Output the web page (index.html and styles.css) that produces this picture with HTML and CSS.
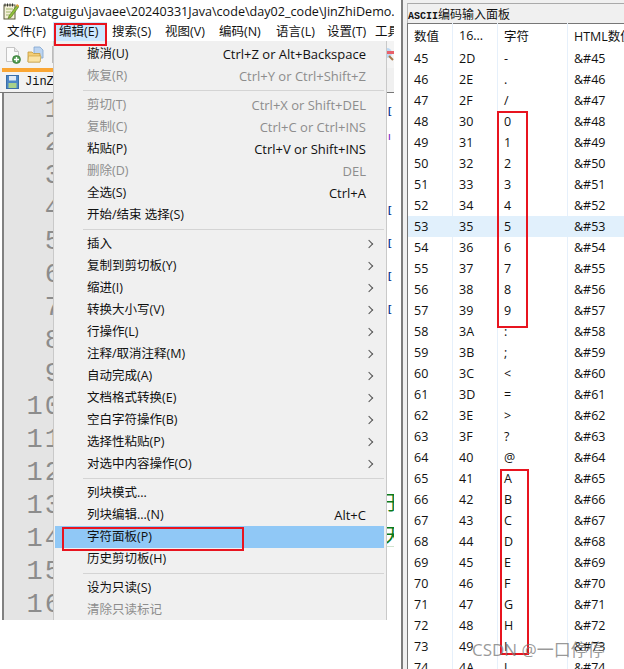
FILE: index.html
```html
<!DOCTYPE html>
<html lang="zh-CN">
<head>
<meta charset="utf-8">
<title>ASCII</title>
<link rel="stylesheet" href="styles.css">
</head>
<body>
<div class="stage">
  <section class="app">
    <header class="titlebar">
      <svg class="app-icon" viewBox="0 0 16 18" width="16" height="18">
        <rect x="1" y="3" width="11" height="14" fill="#f4f0d8" stroke="#5a5a3a"/>
        <path d="M2 1.5v3M4.5 1.5v3M7 1.5v3M9.500 1.500v3" stroke="#333" stroke-width="1"/>
        <path d="M3 7h7M3 10h5M3 13h4" stroke="#9fb56a"/>
        <path d="M6 14l8-11 2 1.500-8 11-3 1z" fill="#8fbf3a" stroke="#4d6b1a" stroke-width=".6"/>
        <path d="M13 3.500l1-1.500 2 1.500-1 1.500z" fill="#e8a23c"/>
      </svg>
      <span class="title-text">D:\atguigu\javaee\20240331Java\code\day02_code\JinZhiDemo.</span>
    </header>
    <nav class="menubar">
      <span class="top-item item-file">文件(F)</span>
      <span class="top-item item-edit">编辑(E)</span>
      <span class="top-item item-search">搜索(S)</span>
      <span class="top-item item-view">视图(V)</span>
      <span class="top-item item-enc">编码(N)</span>
      <span class="top-item item-lang">语言(L)</span>
      <span class="top-item item-set">设置(T)</span>
      <span class="top-item item-tool">工具</span>
    </nav>
    <div class="toolbar">
      <svg class="tool-new" viewBox="0 0 16 18" width="16" height="18">
        <path d="M1.500 1.500h8l4 4v10h-12z" fill="#fbfbfb" stroke="#c4c4c4"/>
        <path d="M9.500 1.500v4h4" fill="#e8e8e8" stroke="#c4c4c4"/>
        <circle cx="11.500" cy="13.500" r="4" fill="#4f9a4f" stroke="#2f6f2f" stroke-width=".6"/>
        <path d="M11.500 11v5M9 13.500h5" stroke="#fff" stroke-width="1.400"/>
      </svg>
      <svg class="tool-open" viewBox="0 0 17 17" width="17" height="17">
        <path d="M7 1h6l3 3v8H7z" fill="#bcd4f0" stroke="#7fa3cf" stroke-width=".8"/>
        <path d="M1 6h4l1.500 1.500H13V16H1z" fill="#f4cd74" stroke="#c49a3c" stroke-width=".8"/>
        <path d="M1.500 10H14l-1 6H1z" fill="#fbe3a4" stroke="#c49a3c" stroke-width=".6"/>
      </svg>
      <span class="tool-sep"></span>
      <svg class="tool-cut" viewBox="0 0 8 13" width="8" height="13">
        <circle cx="1" cy="5" r="5" fill="#bcd8f2"/>
        <rect x="0" y="3" width="8" height="3" fill="#e8606a"/>
        <path d="M3 8l4 4" stroke="#a8794a" stroke-width="2"/>
      </svg>
    </div>
    <div class="tabbar">
      <div class="tab">
        <svg class="tab-icon" viewBox="0 0 13 14" width="13" height="14">
          <rect x=".5" y=".5" width="12" height="13" fill="#4d86c6" stroke="#3a6ea8"/>
          <rect x="3" y="1" width="7" height="4.500" fill="#dfe9f4"/>
          <rect x="2.500" y="8" width="8" height="5" fill="#a8d08a"/>
        </svg>
        <span class="tab-name">JinZhiDemo</span>
      </div>
    </div>
    <div class="editor">
      <div class="gutter">
        <span class="ln">1</span><span class="ln">2</span><span class="ln">3</span><span class="ln">4</span>
        <span class="ln">5</span><span class="ln">6</span><span class="ln">7</span><span class="ln">8</span>
        <span class="ln">9</span><span class="ln">10</span><span class="ln">11</span><span class="ln">12</span>
        <span class="ln">13</span><span class="ln">14</span><span class="ln">15</span><span class="ln">16</span>
      </div>
      <div class="code">
        <div class="line"><span class="frag frag-b">[ '</span></div>
        <div class="line"><span class="frag frag-p">|</span></div>
        <div class="line"></div>
        <div class="line"><span class="frag frag-b">[ '</span></div>
        <div class="line"><span class="frag frag-b">[ '</span></div>
        <div class="line"><span class="frag frag-b">[ '</span></div>
        <div class="line"><span class="frag frag-b">[ '</span></div>
        <div class="line"></div><div class="line"></div><div class="line"></div>
        <div class="line"></div><div class="line"></div>
        <div class="line"><span class="frag frag-g">于</span></div>
        <div class="line"><span class="frag frag-g frag-u">天</span></div>
      </div>
    </div>
  </section>
  <section class="panel">
    <div class="panel-head"><span class="head-latin">ASCII</span>编码输入面板</div>
    <table class="ascii">
      <thead><tr><th>数值</th><th>16...</th><th>字符</th><th>HTML数值</th></tr></thead>
      <tbody>
        <tr><td>45</td><td>2D</td><td>-</td><td>&amp;#45</td></tr>
        <tr><td>46</td><td>2E</td><td>.</td><td>&amp;#46</td></tr>
        <tr><td>47</td><td>2F</td><td>/</td><td>&amp;#47</td></tr>
        <tr><td>48</td><td>30</td><td>0</td><td>&amp;#48</td></tr>
        <tr><td>49</td><td>31</td><td>1</td><td>&amp;#49</td></tr>
        <tr><td>50</td><td>32</td><td>2</td><td>&amp;#50</td></tr>
        <tr><td>51</td><td>33</td><td>3</td><td>&amp;#51</td></tr>
        <tr><td>52</td><td>34</td><td>4</td><td>&amp;#52</td></tr>
        <tr class="hover"><td>53</td><td>35</td><td>5</td><td>&amp;#53</td></tr>
        <tr><td>54</td><td>36</td><td>6</td><td>&amp;#54</td></tr>
        <tr><td>55</td><td>37</td><td>7</td><td>&amp;#55</td></tr>
        <tr><td>56</td><td>38</td><td>8</td><td>&amp;#56</td></tr>
        <tr><td>57</td><td>39</td><td>9</td><td>&amp;#57</td></tr>
        <tr><td>58</td><td>3A</td><td>:</td><td>&amp;#58</td></tr>
        <tr><td>59</td><td>3B</td><td>;</td><td>&amp;#59</td></tr>
        <tr><td>60</td><td>3C</td><td>&lt;</td><td>&amp;#60</td></tr>
        <tr><td>61</td><td>3D</td><td>=</td><td>&amp;#61</td></tr>
        <tr><td>62</td><td>3E</td><td>&gt;</td><td>&amp;#62</td></tr>
        <tr><td>63</td><td>3F</td><td>?</td><td>&amp;#63</td></tr>
        <tr><td>64</td><td>40</td><td>@</td><td>&amp;#64</td></tr>
        <tr><td>65</td><td>41</td><td>A</td><td>&amp;#65</td></tr>
        <tr><td>66</td><td>42</td><td>B</td><td>&amp;#66</td></tr>
        <tr><td>67</td><td>43</td><td>C</td><td>&amp;#67</td></tr>
        <tr><td>68</td><td>44</td><td>D</td><td>&amp;#68</td></tr>
        <tr><td>69</td><td>45</td><td>E</td><td>&amp;#69</td></tr>
        <tr><td>70</td><td>46</td><td>F</td><td>&amp;#70</td></tr>
        <tr><td>71</td><td>47</td><td>G</td><td>&amp;#71</td></tr>
        <tr><td>72</td><td>48</td><td>H</td><td>&amp;#72</td></tr>
        <tr><td>73</td><td>49</td><td>I</td><td>&amp;#73</td></tr>
        <tr><td>74</td><td>4A</td><td>J</td><td>&amp;#74</td></tr>
      </tbody>
    </table>
  </section>

  <div class="menu">
    <div class="mi">撤消(U)<span class="sc">Ctrl+Z or Alt+Backspace</span></div>
    <div class="mi off">恢复(R)<span class="sc">Ctrl+Y or Ctrl+Shift+Z</span></div>
    <div class="msep"></div>
    <div class="mi off">剪切(T)<span class="sc">Ctrl+X or Shift+DEL</span></div>
    <div class="mi off">复制(C)<span class="sc">Ctrl+C or Ctrl+INS</span></div>
    <div class="mi">粘贴(P)<span class="sc">Ctrl+V or Shift+INS</span></div>
    <div class="mi off">删除(D)<span class="sc">DEL</span></div>
    <div class="mi">全选(S)<span class="sc">Ctrl+A</span></div>
    <div class="mi">开始/结束 选择(S)</div>
    <div class="msep"></div>
    <div class="mi sub">插入</div>
    <div class="mi sub">复制到剪切板(Y)</div>
    <div class="mi sub">缩进(I)</div>
    <div class="mi sub">转换大小写(V)</div>
    <div class="mi sub">行操作(L)</div>
    <div class="mi sub">注释/取消注释(M)</div>
    <div class="mi sub">自动完成(A)</div>
    <div class="mi sub">文档格式转换(E)</div>
    <div class="mi sub">空白字符操作(B)</div>
    <div class="mi sub">选择性粘贴(P)</div>
    <div class="mi sub">对选中内容操作(O)</div>
    <div class="msep"></div>
    <div class="mi">列块模式...</div>
    <div class="mi">列块编辑...(N)<span class="sc">Alt+C</span></div>
    <div class="mi active">字符面板(P)</div>
    <div class="mi">历史剪切板(H)</div>
    <div class="msep"></div>
    <div class="mi">设为只读(S)</div>
    <div class="mi off">清除只读标记</div>
  </div>

  <div class="mark mark-edit"></div>
  <div class="mark mark-panel"></div>
  <div class="mark mark-digits"></div>
  <div class="mark mark-letters"></div>
  <div class="watermark">CSDN @一口停停</div>
</div>
</body>
</html>
```

FILE: styles.css
```css
* { box-sizing: border-box; }
html, body { margin: 0; padding: 0; background: #fff; }
body {
  width: 624px;
  height: 669px;
  overflow: hidden;
  font-family: "Open Sans", "Noto Sans CJK SC", sans-serif;
  font-size: 12.5px;
  color: #111;
}
.stage { position: relative; display: flex; width: 624px; height: 669px; overflow: hidden; }

/* left window */
.app { width: 394px; height: 620px; margin-right: 7px; display: flex; flex-direction: column; flex: none; }
.titlebar { height: 22px; display: flex; align-items: center; padding-left: 3px; gap: 4px; background: #fff; flex: none; }
.app-icon { flex: none; }
.title-text { white-space: nowrap; font-size: 12.6px; overflow: hidden; }
.menubar { height: 19px; display: flex; background: #fff; flex: none; overflow: hidden; white-space: nowrap; align-items: center; }
.top-item { flex: none; height: 19px; line-height: 19px; }
.item-file { width: 53px; padding-left: 7px; }
.item-edit { width: 54px; padding-left: 6px; background: #cce8ff; }
.item-search { width: 53px; padding-left: 5px; }
.item-view { width: 54px; padding-left: 5px; }
.item-enc { width: 56px; padding-left: 5px; }
.item-lang { width: 52px; padding-left: 6px; }
.item-set { width: 53px; padding-left: 5px; }
.toolbar { height: 27px; flex: none; background: #f4f4f4; display: flex; align-items: center; padding-left: 5px; }
.tool-new { margin-right: 6px; }
.tool-sep { width: 1px; height: 17px; margin-left: 8px; background: #bbb; }
.tool-cut { margin-left: auto; }
.tabbar { height: 25px; flex: none; background: #f0f0f0; border-bottom: 1px solid #777; padding-left: 2px; }
.tab { width: 100px; height: 24px; border-top: 4px solid #faa634; display: flex; align-items: center; padding-left: 4px; gap: 6px; background: #f2f2f2; }
.tab-name { font-family: "Liberation Mono", monospace; font-size: 12px; color: #111; white-space: nowrap; }
.editor { flex: 1; min-height: 0; display: flex; overflow: hidden; background: #fff; }
.gutter { width: 61px; flex: none; margin-left: 2px; border-left: 2px solid #808080; background: #e4e4e4; display: flex; flex-direction: column; align-items: flex-end; overflow: hidden; }
.ln { height: 33px; line-height: 35px; flex: none; font-family: "Liberation Mono", monospace; font-size: 27px; letter-spacing: 2px; color: #8c8c8c; white-space: nowrap; }
.code { flex: 1; min-width: 0; display: flex; flex-direction: column; }
.line { height: 33px; flex: none; display: flex; justify-content: flex-end; align-items: flex-end; padding-bottom: 8px; }
.frag { width: 7px; overflow: hidden; white-space: nowrap; flex: none; }
.frag-b { font-family: "Liberation Mono", monospace; font-size: 9px; line-height: 12px; color: #00318c; font-weight: bold; }
.frag-p { font-family: "Liberation Mono", monospace; font-size: 8px; line-height: 6px; margin-bottom: 11px; color: #7a20c0; font-weight: bold; }
.frag-g { font-size: 20px; line-height: 22px; height: 22px; text-indent: -4px; color: #0a7a1a; }
.frag-u { border-bottom: 1px solid #cfe3cf; }

/* right panel */
.panel { flex: 1; min-width: 0; height: 669px; background: #f0f0f0; padding: 3px 0 0 4px; border-left: 2px solid #7d7d7d; overflow: hidden; }
.panel-head { height: 20px; line-height: 19px; background: #f0f0f0; border-top: 1px solid #aaa; border-left: 1px solid #bbb; font-family: "Noto Sans CJK SC", monospace; font-size: 12px; white-space: nowrap; }
.head-latin { font-family: "Liberation Mono", monospace; font-size: 10px; font-weight: bold; }
.ascii { width: 218px; border-collapse: collapse; table-layout: fixed; background: #fff; border-top: 1px solid #777; border-left: 1px solid #777; }
.ascii th, .ascii td { height: 21px; padding: 0 0 0 6px; font-weight: normal; text-align: left; border-right: 1px solid #e6f0fb; white-space: nowrap; overflow: hidden; font-size: 12.5px; }
.ascii th { height: 24px; }
.ascii th:nth-child(1) { width: 45px; }
.ascii th:nth-child(2) { width: 45px; }
.ascii th:nth-child(3) { width: 70px; }
.ascii .hover td { background: #e1f0fc; border-right-color: #e1f0fc; }

/* popup menu */
.menu { position: absolute; left: 53px; top: 41px; width: 334px; height: 579px; padding: 2px 2px 0 1px; background: #f0f0f0; border-left: 1px solid #c9c9c9; border-right: 1px solid #c9c9c9; overflow: hidden; }
.mi { position: relative; height: 22px; line-height: 22px; padding-left: 32px; white-space: nowrap; display: flex; justify-content: space-between; padding-right: 18px; }
.mi.off { color: #8d8d8d; }
.mi.active { background: #90c8f6; }
.mi.sub::after { content: ""; position: absolute; right: 12px; top: 8px; width: 5px; height: 5px; border-top: 1px solid #555; border-right: 1px solid #555; transform: rotate(45deg); }
.sc { font-size: 13px; }
.msep { height: 7px; margin-left: 28px; padding-top: 3px; }
.msep::before { content: ""; display: block; height: 1px; background: #d4d4d4; }

/* annotations */
.mark { position: absolute; border: 2px solid #e8141f; }
.mark-edit { left: 54px; top: 23px; width: 53px; height: 23px; }
.mark-panel { left: 62px; top: 527px; width: 182px; height: 24px; }
.mark-digits { left: 497px; top: 111px; width: 31px; height: 217px; }
.mark-letters { left: 500px; top: 469px; width: 29px; height: 186px; }
.watermark { position: absolute; left: 472px; top: 639px; font-size: 17px; line-height: 22px; color: rgba(120,120,120,.75); white-space: nowrap; }
```
